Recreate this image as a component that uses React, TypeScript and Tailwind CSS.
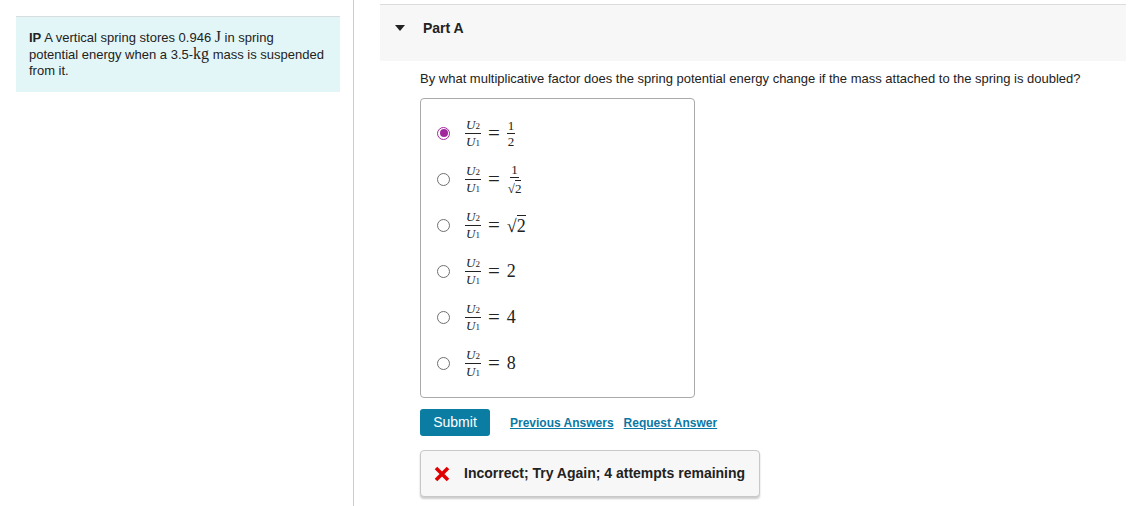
import React from "react";

const serif = { fontFamily: '"Liberation Serif", "DejaVu Serif", serif' };

function U({ sub }: { sub: string }) {
  return (
    <span className="inline-flex items-baseline">
      <span className="italic">U</span>
      <span className="text-[9px] leading-none">{sub}</span>
    </span>
  );
}

function Frac({ num, den }: { num: React.ReactNode; den: React.ReactNode }) {
  return (
    <span className="inline-flex flex-col items-center text-[13px] leading-[11px] align-middle">
      <span className="px-[1px] pb-[2px] border-b border-[#222]">{num}</span>
      <span className="px-[1px] pt-[2px]">{den}</span>
    </span>
  );
}

function Sqrt2({ size = 16 }: { size?: number }) {
  return (
    <span className="inline-flex items-end leading-none">
      <span style={{ fontSize: size }} className="leading-none">√</span>
      <span style={{ fontSize: size }} className="border-t border-[#222] leading-none pt-[1px]">2</span>
    </span>
  );
}

function Radio({ checked }: { checked?: boolean }) {
  if (checked) {
    return (
      <span className="w-[13px] h-[13px] rounded-full border border-[#a1279d] flex items-center justify-center bg-white shrink-0">
        <span className="w-[8px] h-[8px] rounded-full bg-[#a1279d]" />
      </span>
    );
  }
  return <span className="w-[13px] h-[13px] rounded-full border border-[#6f6f6f] bg-white shrink-0" />;
}

function Option({ checked, rhs }: { checked?: boolean; rhs: React.ReactNode }) {
  return (
    <div className="h-[46px] flex items-center pl-[16px]">
      <Radio checked={checked} />
      <div className="ml-[15px] flex items-center text-[#222]" style={serif}>
        <Frac num={<U sub="2" />} den={<U sub="1" />} />
        <span className="text-[21px] leading-none mx-[7px]">=</span>
        {rhs}
      </div>
    </div>
  );
}

export default function App() {
  const sans = { fontFamily: '"Liberation Sans", Arial, sans-serif' };
  return (
    <div className="w-[1146px] h-[506px] bg-white flex text-[#222]" style={sans}>
      <div className="w-[354px] shrink-0 border-r border-[#c9ced3] pt-[16px] pl-[16px] pr-[13px]">
        <div className="border-t border-[#d8dde0] bg-[#e3f6f7] pl-[13px] pr-[4px] pt-[12px] pb-[13px] text-[13px] leading-[16px] text-[#222]">
          <span className="font-bold">IP</span> A vertical spring stores 0.946{" "}
          <span className="text-[16px]" style={serif}>J</span> in spring
          <br />
          potential energy when a 3.5-
          <span className="text-[16px]" style={serif}>kg</span> mass is suspended
          <br />
          from it.
        </div>
      </div>

      <div className="flex-1 pl-[26px] pr-[20px] pt-[4px]">
        <div className="h-[57px] bg-[#f7f7f7] border-t border-[#dcdcdc] flex items-start pt-[15px] pl-[15px]">
          <svg width="10" height="7" viewBox="0 0 10 7" className="mr-[18px] mt-[5px]">
            <polygon points="0,0 10,0 5,6" fill="#222" />
          </svg>
          <span className="font-bold text-[14px] leading-[17px] text-[#222]">Part A</span>
        </div>

        <div className="pl-[40px]">
          <p className="mt-[10px] text-[13px] leading-[16px] text-[#222]">
            By what multiplicative factor does the spring potential energy change if the mass attached to the spring is doubled?
          </p>

          <div className="mt-[11px] w-[275px] border border-[#aaaaaa] rounded-[4px] py-[11px]">
            <Option checked rhs={<Frac num="1" den="2" />} />
            <Option rhs={<Frac num="1" den={<Sqrt2 size={13} />} />} />
            <Option rhs={<Sqrt2 size={18} />} />
            <Option rhs={<span className="text-[18px] leading-none">2</span>} />
            <Option rhs={<span className="text-[18px] leading-none">4</span>} />
            <Option rhs={<span className="text-[18px] leading-none">8</span>} />
          </div>

          <div className="mt-[11px] flex items-center">
            <button className="w-[70px] h-[27px] bg-[#0b7da3] text-white text-[14px] rounded-[3px]">Submit</button>
            <a className="ml-[20px] text-[12px] font-bold text-[#0b78a4] underline">Previous Answers</a>
            <a className="ml-[10px] text-[12px] font-bold text-[#0b78a4] underline">Request Answer</a>
          </div>

          <div className="mt-[14px] w-[340px] h-[47px] bg-[#f7f7f7] border border-[#c8c8c8] rounded-[4px] shadow-[0_2px_2px_rgba(0,0,0,0.2)] flex items-center pl-[13px]">
            <svg width="16" height="16" viewBox="0 0 16 16">
              <path d="M2 2 L14 14 M14 2 L2 14" stroke="#e00000" strokeWidth="3.6" strokeLinecap="butt" />
            </svg>
            <span className="ml-[14px] font-bold text-[14px] text-[#222]">Incorrect; Try Again; 4 attempts remaining</span>
          </div>
        </div>
      </div>
    </div>
  );
}
